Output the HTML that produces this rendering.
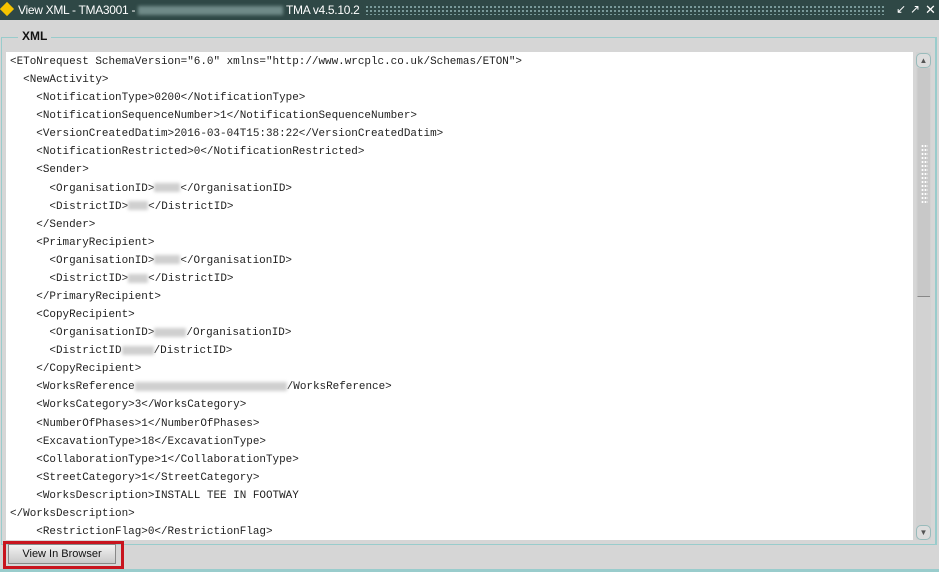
<!DOCTYPE html>
<html><head><style>
body{margin:0;width:939px;height:572px;background:#d6d6d6;position:relative;overflow:hidden;font-family:"Liberation Sans",sans-serif}
.title{position:absolute;left:0;top:0;width:939px;height:20px;background:#2f4846;color:#fff;font-size:12px}
.title .t{position:absolute;left:18px;top:3px;letter-spacing:-0.3px;white-space:nowrap}
.dots{position:absolute;left:365px;top:5px;width:520px;height:10px;background-image:radial-gradient(circle,#8aa 0.8px,transparent 1.2px);background-size:4px 4px}
.ico{position:absolute;left:2px;top:4px;width:10px;height:10px;background:#f5c400;transform:rotate(45deg)}
.bl{display:inline-block;height:9px;background:#cfcfcf;filter:blur(1.5px);vertical-align:middle}
.frame{position:absolute;left:1px;top:37px;width:933px;height:506px;border:1px solid #9cc;border-right:2px solid #9cc}
.legend{position:absolute;left:18px;top:29px;background:#d6d6d6;padding:0 4px;font-weight:bold;font-size:12px;color:#111}
.ta{position:absolute;left:6px;top:52px;width:907px;height:488px;background:#fff;overflow:hidden}
pre{margin:0;position:absolute;left:4px;top:1px;font-family:"Liberation Mono",monospace;font-size:10.95px;line-height:18.08px;color:#222}
.sb{position:absolute;left:916px;top:52px;width:15px;height:488px;background:#d2d2d2}
.btn{position:absolute;width:13px;height:13px;left:0;border:1px solid #9bb;border-radius:5px;background:#ddd;font-size:8px;color:#555;text-align:center;line-height:13px}
.thumb{position:absolute;left:1px;top:16px;width:12px;height:228px;background:#c8c8c8;border-bottom:1px solid #888;border-left:1px solid #ccc}
.grip{position:absolute;left:3px;top:76px;width:7px;height:60px;background-image:radial-gradient(circle,#fff 0.8px,transparent 1.2px);background-size:3px 4px}
.red{position:absolute;left:3px;top:541px;width:115px;height:22px;border:3px solid #c8141e}
.vb{position:absolute;left:8px;top:544px;width:108px;height:20px;background:linear-gradient(#f2f2f2,#c9c9c9);border:1px solid #888;box-sizing:border-box;font-size:11px;text-align:center;line-height:19px;color:#111}
.edge{position:absolute;left:0;top:569px;width:939px;height:3px;background:#9cc}
</style></head><body>
<div class="title"><div class="ico"></div><span class="t">View XML - TMA3001 - <span class="bl" style="width:145px;background:#6f8a88"></span> TMA v4.5.10.2</span><div class="dots"></div>
<span style="position:absolute;left:896px;top:2px;font-size:12px">&#8601;</span><span style="position:absolute;left:910px;top:2px;font-size:12px">&#8599;</span><span style="position:absolute;left:925px;top:2px;font-size:13px">&#10005;</span></div>
<div class="frame"></div><div class="legend">XML</div>
<div class="ta"><pre>&lt;EToNrequest SchemaVersion="6.0" xmlns="http://www.wrcplc.co.uk/Schemas/ETON"&gt;
  &lt;NewActivity&gt;
    &lt;NotificationType&gt;0200&lt;/NotificationType&gt;
    &lt;NotificationSequenceNumber&gt;1&lt;/NotificationSequenceNumber&gt;
    &lt;VersionCreatedDatim&gt;2016-03-04T15:38:22&lt;/VersionCreatedDatim&gt;
    &lt;NotificationRestricted&gt;0&lt;/NotificationRestricted&gt;
    &lt;Sender&gt;
      &lt;OrganisationID&gt;<span class="bl" style="width:26px"></span>&lt;/OrganisationID&gt;
      &lt;DistrictID&gt;<span class="bl" style="width:20px"></span>&lt;/DistrictID&gt;
    &lt;/Sender&gt;
    &lt;PrimaryRecipient&gt;
      &lt;OrganisationID&gt;<span class="bl" style="width:26px"></span>&lt;/OrganisationID&gt;
      &lt;DistrictID&gt;<span class="bl" style="width:20px"></span>&lt;/DistrictID&gt;
    &lt;/PrimaryRecipient&gt;
    &lt;CopyRecipient&gt;
      &lt;OrganisationID&gt;<span class="bl" style="width:32px"></span>/OrganisationID&gt;
      &lt;DistrictID<span class="bl" style="width:32px"></span>/DistrictID&gt;
    &lt;/CopyRecipient&gt;
    &lt;WorksReference<span class="bl" style="width:152px"></span>/WorksReference&gt;
    &lt;WorksCategory&gt;3&lt;/WorksCategory&gt;
    &lt;NumberOfPhases&gt;1&lt;/NumberOfPhases&gt;
    &lt;ExcavationType&gt;18&lt;/ExcavationType&gt;
    &lt;CollaborationType&gt;1&lt;/CollaborationType&gt;
    &lt;StreetCategory&gt;1&lt;/StreetCategory&gt;
    &lt;WorksDescription&gt;INSTALL TEE IN FOOTWAY
&lt;/WorksDescription&gt;
    &lt;RestrictionFlag&gt;0&lt;/RestrictionFlag&gt;</pre></div>
<div class="sb"><div class="btn" style="top:1px">&#9650;</div><div class="thumb"><div class="grip"></div></div><div class="btn" style="top:473px">&#9660;</div></div>
<div class="red"></div><div class="vb">View In Browser</div>
<div class="edge"></div>
</body></html>
